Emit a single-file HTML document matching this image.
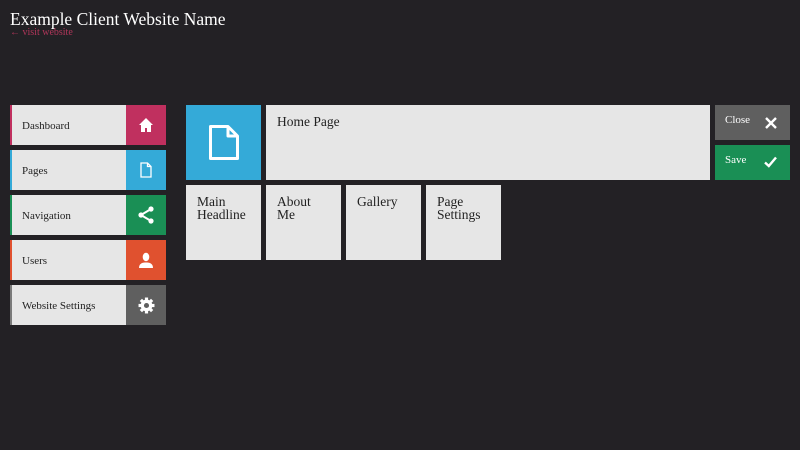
<!DOCTYPE html>
<html><head><style>
*{margin:0;padding:0;box-sizing:border-box}
body{width:800px;height:450px;background:#232125;font-family:"Liberation Serif",serif;position:relative;overflow:hidden}
.a{position:absolute}
h1{position:absolute;left:10px;top:9px;font-size:17.5px;font-weight:normal;color:#fff;line-height:20px}
.visit{left:10px;top:27px;font-size:10px;color:#b0365a;line-height:12px}
.lab{background:#e6e6e6;height:40px;width:116px;left:10px;border-left:2px solid;font-size:11px;color:#222;padding:15px 0 0 10px;line-height:12px}
.ic{width:40px;height:40px;left:126px;display:flex;align-items:center;justify-content:center}
.tile{background:#e6e6e6;width:75px;height:75px;top:185px;font-size:13.5px;color:#222;padding:10px 0 0 11px;line-height:13px}
</style></head><body>
<h1>Example Client Website Name</h1>
<div class="a visit">← visit website</div>

<div class="a lab" style="top:105px;border-color:#c0305f">Dashboard</div>
<div class="a ic" style="top:105px;background:#c0305f"><svg width="16" height="16" viewBox="0 0 16 16"><path d="M8 1 L1 8 H3 V15 H7 V11 H9 V15 H13 V8 H15 Z" fill="#fff"/></svg></div>
<div class="a lab" style="top:150px;border-color:#34aad8">Pages</div>
<div class="a ic" style="top:150px;background:#34aad8"><svg width="14" height="16" viewBox="0 0 14 16"><path d="M2 1 H8.5 L12 4.5 V15 H2 Z M8.5 1 V4.5 H12" fill="none" stroke="#fff" stroke-width="1.3"/></svg></div>
<div class="a lab" style="top:195px;border-color:#1a8f55">Navigation</div>
<div class="a ic" style="top:195px;background:#1a8f55"><svg width="18" height="18" viewBox="0 0 18 18"><path d="M14 3 L4 9 L14 15" stroke="#fff" stroke-width="2" fill="none"/><circle cx="14" cy="3" r="2.6" fill="#fff"/><circle cx="4" cy="9" r="2.6" fill="#fff"/><circle cx="14" cy="15" r="2.6" fill="#fff"/></svg></div>
<div class="a lab" style="top:240px;border-color:#e0512f">Users</div>
<div class="a ic" style="top:240px;background:#e0512f"><svg width="16" height="16" viewBox="0 0 16 16"><ellipse cx="8" cy="5" rx="3.3" ry="4.2" fill="#fff"/><path d="M1 16 C1 11 5 10.5 8 10.5 C11 10.5 15 11 15 16 Z" fill="#fff"/></svg></div>
<div class="a lab" style="top:285px;border-color:#7a7a7a">Website Settings</div>
<div class="a ic" style="top:285px;background:#5f5f5f"><svg width="17" height="17" viewBox="0 0 16 16"><g fill="#fff"><circle cx="8" cy="8" r="5.5"/><rect x="6.5" y="0.5" width="3" height="15"/><rect x="6.5" y="0.5" width="3" height="15" transform="rotate(45 8 8)"/><rect x="6.5" y="0.5" width="3" height="15" transform="rotate(90 8 8)"/><rect x="6.5" y="0.5" width="3" height="15" transform="rotate(135 8 8)"/></g><circle cx="8" cy="8" r="2.4" fill="#5f5f5f"/></svg></div>

<div class="a" style="left:186px;top:105px;width:75px;height:75px;background:#34aad8"><svg class="a" style="left:22px;top:19px" width="32" height="37" viewBox="0 0 32 37"><path d="M2.5 2.5 H20 L29.5 12 V34.5 H2.5 Z M20 2.5 V12 H29.5" fill="none" stroke="#fff" stroke-width="3" stroke-linejoin="round"/></svg></div>
<div class="a" style="left:266px;top:105px;width:444px;height:75px;background:#e6e6e6;font-size:13.5px;color:#222;padding:9px 0 0 11px">Home Page</div>
<div class="a" style="left:715px;top:105px;width:75px;height:35px;background:#5f5f5f;color:#fff;font-size:11px;padding:9px 0 0 10px">Close<svg class="a" style="left:50px;top:12px" width="12" height="12" viewBox="0 0 12 12"><path d="M1 1 L11 11 M11 1 L1 11" stroke="#fff" stroke-width="2.4"/></svg></div>
<div class="a" style="left:715px;top:145px;width:75px;height:35px;background:#1a8f55;color:#fff;font-size:11px;padding:9px 0 0 10px">Save<svg class="a" style="left:49px;top:11px" width="13" height="12" viewBox="0 0 13 12"><path d="M1 6.5 L4.8 10 L12 1.5" stroke="#fff" stroke-width="2.4" fill="none"/></svg></div>

<div class="a tile" style="left:186px;padding-top:10px">Main<br>Headline</div>
<div class="a tile" style="left:266px;padding-top:10px">About<br>Me</div>
<div class="a tile" style="left:346px;padding-top:10px">Gallery</div>
<div class="a tile" style="left:426px;padding-top:10px">Page<br>Settings</div>
</body></html>
